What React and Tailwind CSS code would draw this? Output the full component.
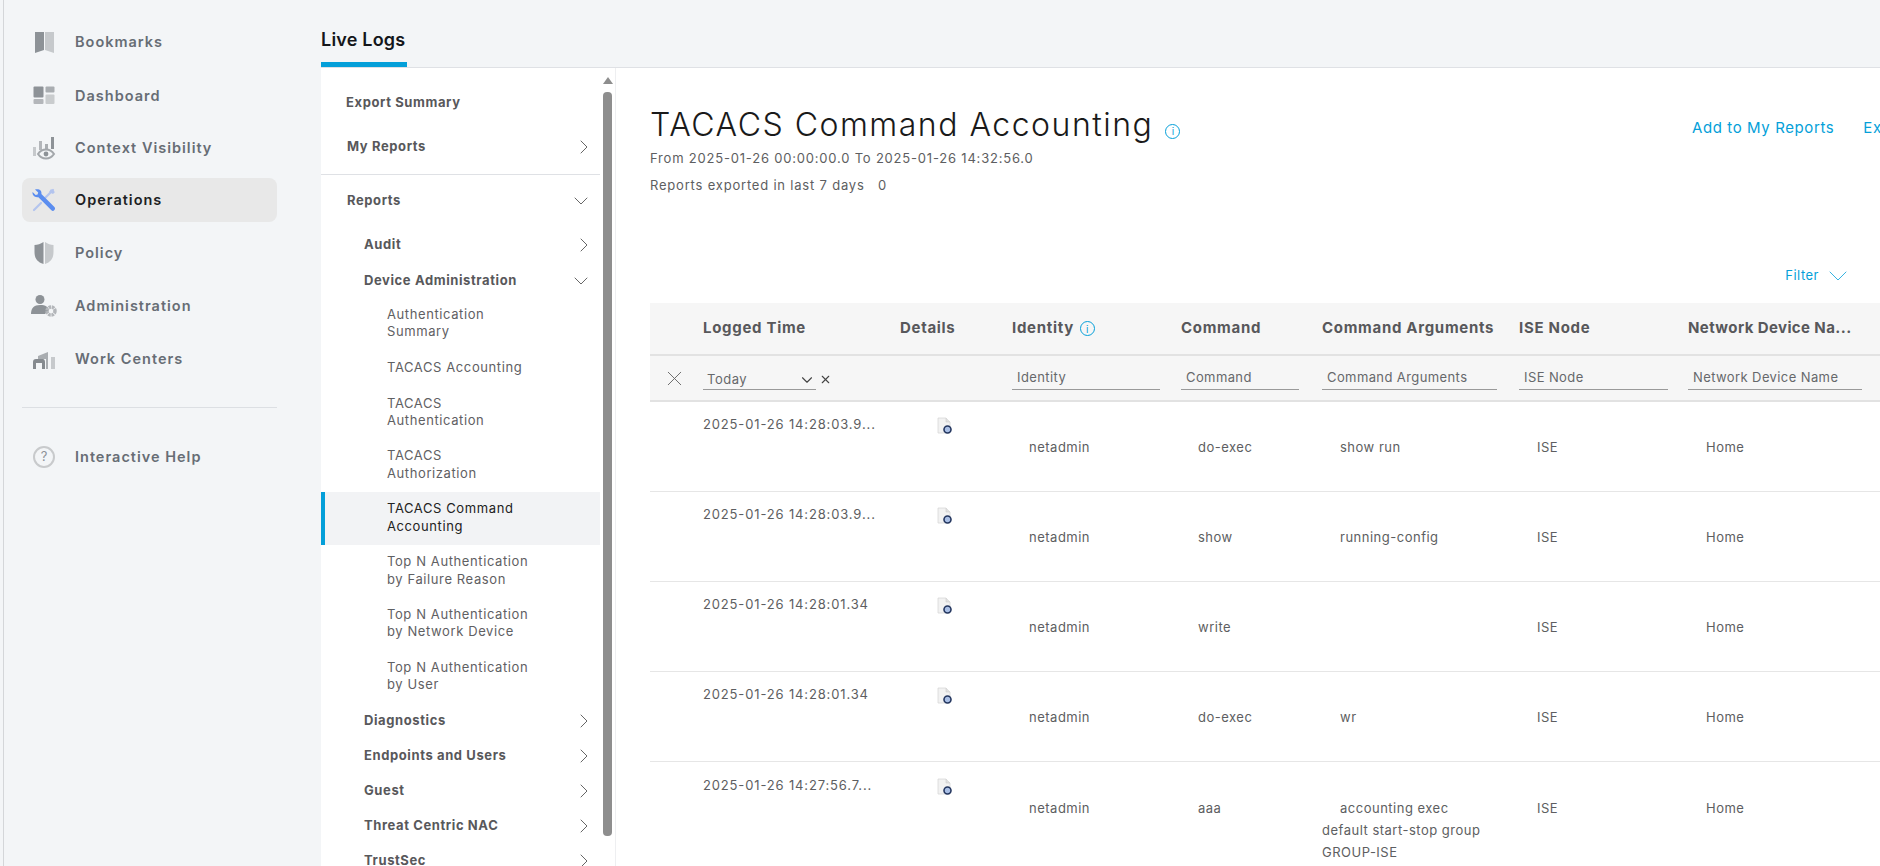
import { ChevronDown, ChevronRight, X } from 'lucide-react'

function BookmarkIcon() {
  return (
    <svg width="22" height="24" viewBox="0 0 22 24">
      <path d="M2 2h9v18l-9 3z" fill="#8d9297" />
      <path d="M12 2h9v21l-9-3z" fill="#c6c9cc" />
    </svg>
  )
}

function DashboardIcon() {
  return (
    <svg width="22" height="20" viewBox="0 0 22 20">
      <rect x="0.5" y="0.5" width="10" height="11" rx="1" fill="#8d9297" />
      <rect x="12.5" y="0.5" width="9" height="6" rx="1" fill="#a9adb1" />
      <rect x="0.5" y="13" width="10" height="5" rx="1" fill="#b3b6ba" />
      <rect x="12.5" y="8.5" width="9" height="9.5" rx="1" fill="#c9ccce" />
    </svg>
  )
}

function ContextIcon() {
  return (
    <svg width="24" height="24" viewBox="0 0 24 24">
      <rect x="1" y="11" width="3" height="9" fill="#c6c9cc" />
      <rect x="7" y="5" width="3" height="9" fill="#b3b6ba" />
      <rect x="13" y="8" width="3" height="6" fill="#a9adb1" />
      <rect x="19" y="1" width="3" height="12" fill="#8d9297" />
      <path d="M6 18c4-6 12-6 16 0-4 6-12 6-16 0z" fill="none" stroke="#a3a7ab" strokeWidth="2" />
      <circle cx="14" cy="18" r="2.4" fill="#8d9297" />
    </svg>
  )
}

function OperationsIcon() {
  return (
    <svg width="24" height="24" viewBox="0 0 24 24">
      <path d="M21 2l-9 9M2 22l7-7" stroke="#b3c4ee" strokeWidth="2.2" strokeLinecap="round" />
      <path d="M19 1l4 3-2 2-4-2z" fill="#b3c4ee" />
      <path
        d="M3 1.5l3.2 3-.6 2-2 .6-3-3C0 7 2.6 10 6.4 9.2l13 13c1 1 2 1 3-.2.9-1 .9-2 0-2.9l-13-13C10.2 2.500 7 .3 3 1.500z"
        fill="#5b8def"
      />
    </svg>
  )
}

function PolicyIcon() {
  return (
    <svg width="22" height="24" viewBox="0 0 22 24">
      <path d="M10.500 1v22C4 21 1.500 17 1.500 11V4c3 0 6-1 9-3z" fill="#8d9297" />
      <path d="M12 1v22c6-2 8.500-6 8.500-12V4c-3 0-5.500-1-8.500-3z" fill="#c6c9cc" />
    </svg>
  )
}

function AdminIcon() {
  return (
    <svg width="28" height="24" viewBox="0 0 28 24">
      <circle cx="10" cy="5.500" r="4.500" fill="#8d9297" />
      <path d="M1 20c0-6 3-9 9-9s8 2 9 5l-4 4z" fill="#8d9297" />
      <circle cx="21" cy="17" r="4" fill="none" stroke="#b3b6ba" strokeWidth="3.500" strokeDasharray="2.500 0.700" />
    </svg>
  )
}

function WorkCentersIcon() {
  return (
    <svg width="24" height="22" viewBox="0 0 24 22">
      <path d="M6 8l10-4v17h-2V11H6z" fill="#a9adb1" />
      <path d="M1 21v-7c0-2 1-3 3-3h7c1 0 2 1 2 3v7h-3v-6H4v6z" fill="#858a8f" />
      <rect x="19" y="9" width="4" height="12" fill="#c6c9cc" />
    </svg>
  )
}

function HelpIcon() {
  return (
    <div className="flex h-[22px] w-[22px] items-center justify-center rounded-full border-2 border-[#c8cacc] text-[13px] text-[#8d9297]">
      ?
    </div>
  )
}

function InfoIcon() {
  return (
    <span className="inline-flex h-[15px] w-[15px] items-center justify-center rounded-full border border-[#049fd9] text-[10px] leading-none font-normal text-[#049fd9]">
      i
    </span>
  )
}

function DocIcon() {
  return (
    <svg width="16" height="17" viewBox="0 0 16 17">
      <path d="M1 1h8l4 4v11H1z" fill="#f2f2f2" stroke="#d8d8d8" strokeWidth="0.800" />
      <path d="M9 1v4h4" fill="#e0e0e0" stroke="#cfcfcf" strokeWidth="0.600" />
      <circle cx="10.500" cy="12.500" r="3.500" fill="#a9bfe6" stroke="#24365f" strokeWidth="1.600" />
    </svg>
  )
}

const NAV_ITEMS = [
  { label: 'Bookmarks', icon: <BookmarkIcon />, height: 'h-[54px]' },
  { label: 'Dashboard', icon: <DashboardIcon />, height: 'h-[53px]' },
  { label: 'Context Visibility', icon: <ContextIcon />, height: 'h-[52px]' },
  { label: 'Operations', icon: <OperationsIcon />, height: 'mt-[4px] h-[44px]', active: true },
  { label: 'Policy', icon: <PolicyIcon />, height: 'h-[62px]' },
  { label: 'Administration', icon: <AdminIcon />, height: 'h-[44px]' },
  { label: 'Work Centers', icon: <WorkCentersIcon />, height: 'h-[62px]' },
]

function Sidebar() {
  return (
    <aside className="w-[318px] shrink-0 border-l border-[#d4d6d9] bg-[#f3f5f7] pl-[18px] pt-[15px]">
      {NAV_ITEMS.map((item) => (
        <div
          key={item.label}
          className={`flex w-[255px] items-center rounded-lg ${item.height} ${item.active ? 'bg-[#e8e8e8] text-[#1d1f24]' : 'text-[#676d75]'}`}
        >
          <span className="mr-[9px] flex w-[44px] shrink-0 justify-center">{item.icon}</span>
          <span className="text-[14.500px] font-semibold tracking-[1px]">{item.label}</span>
        </div>
      ))}
      <div className="mt-[17px] w-[255px] border-t border-[#dcdfe3]" />
      <div className="mt-[27px] flex h-[44px] w-[255px] items-center text-[#676d75]">
        <span className="mr-[9px] flex w-[44px] shrink-0 justify-center">
          <HelpIcon />
        </span>
        <span className="text-[14.500px] font-semibold tracking-[1px]">Interactive Help</span>
      </div>
    </aside>
  )
}

function MenuGroup({ label, open, height = 'h-[35px]', indent = 'pl-[43px]' }) {
  return (
    <div className={`flex items-center justify-between pr-[4px] ${height} ${indent}`}>
      <span className="text-[13px] font-bold tracking-[0.6px] text-[#58585b]">{label}</span>
      {open ? (
        <ChevronDown size={24} strokeWidth={1} color="#666" className="mr-[3px]" />
      ) : (
        <ChevronRight size={24} strokeWidth={1} color="#666" />
      )}
    </div>
  )
}

function MenuLink({ lines, active }) {
  const height = lines.length === 1 ? 'h-[36px]' : 'h-[52.800px]'
  return (
    <div
      className={`flex flex-col justify-center pb-[2px] text-[13px] leading-[17.500px] tracking-[0.6px] ${height} ${active ? 'border-l-4 border-[#049fd9] bg-[#f2f3f5] pl-[62px] text-[#222]' : 'pl-[66px] text-[#5f6063]'}`}
    >
      {lines.map((line) => (
        <span key={line}>{line}</span>
      ))}
    </div>
  )
}

function ReportMenu() {
  return (
    <div className="flex h-full w-[294px] shrink-0 overflow-hidden bg-white">
      <nav className="w-[279px] shrink-0 pt-[13px]">
        <div className="flex h-[44px] items-center pl-[25px] text-[13px] font-bold tracking-[0.6px] text-[#58585b]">
          Export Summary
        </div>
        <MenuGroup label="My Reports" height="h-[44px]" indent="pl-[26px]" />
        <div className="mt-[5px] border-t border-[#dfe1e5]" />
        <div className="pt-[4px]">
          <MenuGroup label="Reports" open height="h-[44px]" indent="pl-[26px]" />
        </div>
        <MenuGroup label="Audit" height="mt-[4px] h-[36px]" />
        <MenuGroup label="Device Administration" open />
        <MenuLink lines={['Authentication', 'Summary']} />
        <MenuLink lines={['TACACS Accounting']} />
        <MenuLink lines={['TACACS', 'Authentication']} />
        <MenuLink lines={['TACACS', 'Authorization']} />
        <MenuLink lines={['TACACS Command', 'Accounting']} active />
        <MenuLink lines={['Top N Authentication', 'by Failure Reason']} />
        <MenuLink lines={['Top N Authentication', 'by Network Device']} />
        <MenuLink lines={['Top N Authentication', 'by User']} />
        <MenuGroup label="Diagnostics" />
        <MenuGroup label="Endpoints and Users" />
        <MenuGroup label="Guest" />
        <MenuGroup label="Threat Centric NAC" />
        <MenuGroup label="TrustSec" />
      </nav>
      <div className="ml-[3px] flex w-[9px] shrink-0 flex-col items-center pt-[9px]">
        <div className="h-0 w-0 border-x-[5px] border-b-[7px] border-x-transparent border-b-[#8e8e8e]" />
        <div className="mt-[8px] h-[744px] w-[9px] rounded-[4px] bg-[#8e8e8e]" />
      </div>
    </div>
  )
}

const COLUMNS = 'grid grid-cols-[53px_197px_112px_169px_141px_197px_169px_192px]'

const ROWS = [
  { time: '2025-01-26 14:28:03.9...', command: 'do-exec', args: 'show run' },
  { time: '2025-01-26 14:28:03.9...', command: 'show', args: 'running-config' },
  { time: '2025-01-26 14:28:01.34', command: 'write', args: '' },
  { time: '2025-01-26 14:28:01.34', command: 'do-exec', args: 'wr' },
  { time: '2025-01-26 14:27:56.7...', command: 'aaa', args: 'accounting exec default start-stop group GROUP-ISE', last: true },
]

function HeaderCell({ children }) {
  return (
    <div className="flex items-center gap-[6px] text-[15px] font-bold tracking-[0.7px] whitespace-nowrap text-[#58585b]">
      {children}
    </div>
  )
}

function FilterInput({ placeholder, width }) {
  return (
    <div className={`flex h-[31px] items-end border-b border-[#9a9a9a] pb-[2px] pl-[5px] text-[13px] tracking-[0.4px] text-[#66686b] ${width}`}>
      {placeholder}
    </div>
  )
}

function ReportTable() {
  return (
    <div className="mt-[14px] w-[1230px] text-[13px] tracking-[0.5px] text-[#5d5e61]">
      <div className={`${COLUMNS} h-[53px] border-b-2 border-[#e2e2e2] bg-[#f6f6f6]`}>
        <div />
        <HeaderCell>Logged Time</HeaderCell>
        <HeaderCell>Details</HeaderCell>
        <HeaderCell>
          Identity <InfoIcon />
        </HeaderCell>
        <HeaderCell>Command</HeaderCell>
        <HeaderCell>Command Arguments</HeaderCell>
        <HeaderCell>ISE Node</HeaderCell>
        <HeaderCell>
          <span className="tracking-[0.4px]">Network Device Na...</span>
        </HeaderCell>
      </div>
      <div className={`${COLUMNS} h-[46px] border-b-2 border-[#e2e2e2] bg-[#f6f6f6] pt-[3px]`}>
        <div className="flex items-center pb-[3px] pl-[12px]">
          <X size={25} strokeWidth={0.9} color="#666" />
        </div>
        <div className="flex items-start">
          <div className="mt-[6px] flex h-[25px] w-[113px] items-end justify-between border-b border-[#9a9a9a] pl-[4px] text-[#66686b]">
            Today
            <ChevronDown size={18} strokeWidth={1.500} color="#444" />
          </div>
          <X size={13} strokeWidth={2} color="#444" className="ml-[3px] mt-[14px]" />
        </div>
        <div />
        <FilterInput placeholder="Identity" width="w-[148px]" />
        <FilterInput placeholder="Command" width="w-[118px]" />
        <FilterInput placeholder="Command Arguments" width="w-[175px]" />
        <FilterInput placeholder="ISE Node" width="w-[149px]" />
        <FilterInput placeholder="Network Device Name" width="w-[174px]" />
      </div>
      {ROWS.map((row, index) => (
        <div
          key={index}
          className={`${COLUMNS} ${row.last ? 'pt-[1px]' : 'h-[90px] border-b border-[#e6e6e6]'}`}
        >
          <div />
          <div className="pt-[11px] leading-[22px] tracking-[0.85px] whitespace-nowrap">{row.time}</div>
          <div className="pl-[37px] pt-[15px]">
            <DocIcon />
          </div>
          <div className="pl-[17px] pt-[33.500px] leading-[22px]">netadmin</div>
          <div className="pl-[17px] pt-[33.500px] leading-[22px]">{row.command}</div>
          <div className="pr-[30px] pt-[33.500px] indent-[18px] leading-[22px]">{row.args}</div>
          <div className="pl-[18px] pt-[33.500px] leading-[22px]">ISE</div>
          <div className="pl-[18px] pt-[33.500px] leading-[22px]">Home</div>
        </div>
      ))}
    </div>
  )
}

function ReportContent() {
  return (
    <section className="min-w-0 flex-1 overflow-hidden border-l border-[#eeeff1] bg-white pl-[34px] pt-[37px]">
      <div className="flex h-[158px] items-start">
        <div className="w-[1042px] shrink-0">
          <div className="flex items-center gap-[12px]">
            <h1 className="text-[32px] leading-[40px] font-light tracking-[1.5px] text-[#1a1a1a]">
              TACACS Command Accounting
            </h1>
            <span className="mt-[8px]">
              <InfoIcon />
            </span>
          </div>
          <p className="mt-[4px] text-[13px] leading-[18px] tracking-[0.8px] text-[#5d5e61]">
            From 2025-01-26 00:00:00.0 To 2025-01-26 14:32:56.0
          </p>
          <p className="mt-[9px] text-[13px] leading-[18px] tracking-[0.8px] text-[#5d5e61]">
            Reports exported in last 7 days&nbsp;&nbsp;&nbsp;0
          </p>
        </div>
        <div className="flex shrink-0 gap-[29px] whitespace-nowrap pt-[12px] text-[15px] tracking-[0.6px] text-[#049fd9]">
          <span>Add to My Reports</span>
          <span>Export To</span>
        </div>
      </div>
      <div className="flex h-[26px] w-[1230px] items-center justify-end gap-[3px] pr-[26px] text-[13px] tracking-[0.5px] text-[#049fd9]">
        Filter
        <ChevronDown size={32} strokeWidth={0.6} color="#049fd9" className="-my-[4px]" />
      </div>
      <ReportTable />
    </section>
  )
}

export default function App() {
  return (
    <div className="flex h-[866px] w-[1880px] overflow-hidden bg-[#f3f5f7] pl-[3px] font-['Inter',sans-serif]">
      <Sidebar />
      <main className="flex min-w-0 flex-1 flex-col">
        <div className="h-[68px] shrink-0 border-b border-[#dfe1e5]">
          <div className="flex h-[67px] w-[86px] items-end border-b-[5px] border-[#049fd9] pb-[10px] text-[18px] leading-[24px] font-semibold tracking-[0.2px] whitespace-nowrap text-[#14161a]">
            Live Logs
          </div>
        </div>
        <div className="flex min-h-0 flex-1">
          <ReportMenu />
          <ReportContent />
        </div>
      </main>
    </div>
  )
}
